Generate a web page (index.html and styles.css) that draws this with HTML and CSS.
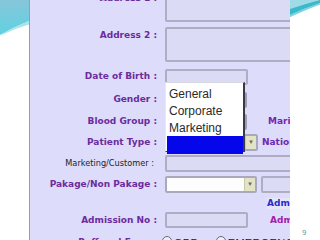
FILE: index.html
```html
<!DOCTYPE html>
<html>
<head>
<meta charset="utf-8">
<link rel="stylesheet" href="styles.css">
</head>
<body>
<div class="slide">
  <div class="gutter gutter-left">
    <svg class="wave-left" width="29" height="40" viewBox="0 0 29 40">
      <defs>
        <linearGradient id="gl" x1="0" y1="0" x2="0" y2="1">
          <stop offset="0" stop-color="#86c6da"/>
          <stop offset="1" stop-color="#5fd2e0"/>
        </linearGradient>
      </defs>
      <path d="M0 0 H29 V21 Q14 27 0 35 Z" fill="url(#gl)"/>
      <path d="M9 31 Q19 25 29 23.5" stroke="#e8f8fa" stroke-width="1" fill="none"/>
      <path d="M0 35 Q14 27 29 21 V24.5 Q16 28 4 34 Z" fill="#a6e4ec"/>
    </svg>
  </div>
  <div class="panel">
    <div class="form">
      <div class="row row-area row-first">
        <div class="lbl">Address 1 :</div>
        <div class="cell"><div class="field area"></div></div>
      </div>
      <div class="row row-area row-second">
        <div class="lbl">Address 2 :</div>
        <div class="cell"><div class="field area"></div></div>
      </div>
      <div class="row h23">
        <div class="lbl">Date of Birth :</div>
        <div class="cell"><div class="field short"></div></div>
      </div>
      <div class="row h23">
        <div class="lbl">Gender :</div>
        <div class="cell">
          <div class="select select-hidden"><span class="sel-body"></span></div>
        </div>
      </div>
      <div class="row h21">
        <div class="lbl">Blood Group :</div>
        <div class="cell">
          <div class="select select-hidden"><span class="sel-body"></span></div>
          <div class="lbl-side lbl-mari">Marital Status :</div>
        </div>
      </div>
      <div class="row h21">
        <div class="lbl">Patient Type :</div>
        <div class="cell">
          <div class="select select-open">
            <span class="sel-body"></span><span class="arrow">&#9662;</span>
            <ul class="listbox">
              <li>General</li>
              <li>Corporate</li>
              <li>Marketing</li>
              <li class="hl"></li>
            </ul>
          </div>
          <div class="lbl-side lbl-natio">Nationality :</div>
        </div>
      </div>
      <div class="row h21">
        <div class="lbl lbl-plain">Marketing/Customer :</div>
        <div class="cell"><div class="field wide"></div></div>
      </div>
      <div class="row h21">
        <div class="lbl">Pakage/Non Pakage :</div>
        <div class="cell">
          <div class="select select-white"><span class="sel-body"></span><span class="arrow">&#9662;</span></div>
          <div class="field extra"></div>
        </div>
      </div>
      <div class="row h16">
        <div class="lbl"></div>
        <div class="cell"><div class="lbl-side lbl-admis">Admission Date :</div></div>
      </div>
      <div class="row h18">
        <div class="lbl">Admission No :</div>
        <div class="cell">
          <div class="field short"></div>
          <div class="lbl-side lbl-admi">Admission Time :</div>
        </div>
      </div>
      <div class="row h20 row-last">
        <div class="lbl">Reffered From :</div>
        <div class="cell cell-radio">
          <span class="radio"></span><span class="radio-text">OPD</span>
          <span class="radio radio-second"></span><span class="radio-text">EMERGENCY</span>
        </div>
      </div>
    </div>
  </div>
  <div class="gutter gutter-right">
    <svg class="wave-right" width="30" height="20" viewBox="0 0 30 20">
      <path d="M0 0 H30 V4 Q15 10 0 17 Z" fill="#9fdbe6"/>
      <path d="M0 9 Q15 4 30 0 V3 Q15 8 0 15 Z" fill="#39b9ca"/>
      <path d="M0 15 Q15 8 30 3 V4.5 Q15 10 0 17 Z" fill="#7fd3e0"/>
    </svg>
    <span class="page-no">9</span>
  </div>
</div>
</body>
</html>
```

FILE: styles.css
```css
html, body {
  margin: 0;
  padding: 0;
  background: #ffffff;
}

.slide {
  width: 320px;
  height: 240px;
  display: flex;
  overflow: hidden;
  background: #ffffff;
}

.gutter {
  flex: none;
  display: flex;
  flex-direction: column;
}

.gutter-left {
  width: 29px;
}

.gutter-right {
  width: 30px;
  justify-content: space-between;
  align-items: flex-start;
}

.wave-left, .wave-right {
  display: block;
}

.page-no {
  font: 7px/8px "DejaVu Sans", sans-serif;
  color: #5fa6b4;
  margin: 0 0 3px 12px;
}

.panel {
  flex: none;
  width: 260px;
  height: 240px;
  border-left: 1px solid #9a9ab4;
  background: #dddcfa;
  overflow: hidden;
}

.form {
  margin-top: -13px;
  display: flex;
  flex-direction: column;
}

.row {
  display: flex;
  align-items: center;
  flex: none;
}

.row-area {
  align-items: flex-start;
  height: 35px;
}

.row-first {
  margin-bottom: 5px;
}

.row-first .lbl {
  padding-top: 6px;
}

.row-second {
  margin-bottom: 3px;
}

.row-second .lbl {
  padding-top: 3px;
}

.h23 { height: 23px; }
.h21 { height: 21px; }
.h20 { height: 20px; }
.h18 { height: 18px; }
.h16 { height: 16px; }

.row-last {
  align-items: flex-start;
}

.row-last .lbl {
  padding-top: 8px;
}

.lbl {
  flex: none;
  width: 127px;
  text-align: right;
  font: bold 9px/11px "DejaVu Sans", sans-serif;
  color: #6c2c9e;
  white-space: nowrap;
}

.lbl-plain {
  font: 8.2px/11px "DejaVu Sans", sans-serif;
  color: #1e1e1e;
  padding-right: 3px;
  box-sizing: border-box;
}

.cell {
  flex: none;
  margin-left: 8px;
  display: flex;
  align-items: center;
  white-space: nowrap;
}

.cell-radio {
  margin-left: 5px;
  align-items: flex-start;
  padding-top: 7px;
}

.field {
  flex: none;
  box-sizing: border-box;
  height: 17px;
  border: 2px solid #aeadc4;
  border-radius: 2px;
  background: #dcdbf6;
}

.area {
  width: 140px;
  height: 35px;
}

.short {
  width: 83px;
  height: 16px;
}

.wide {
  width: 140px;
}

.extra {
  width: 40px;
  margin-left: 4px;
}

.select {
  flex: none;
  position: relative;
  box-sizing: border-box;
  width: 93px;
  height: 17px;
  border: 2px solid #aaa9bc;
  border-radius: 2px;
  background: #dcdbf6;
  display: flex;
  align-items: stretch;
}

.select-hidden {
  width: 82px;
  height: 16px;
  border-color: #9c9cb0;
}

.select-white {
  width: 92px;
  background: #fdfdfd;
}

.sel-body {
  flex: 1;
}

.arrow {
  flex: none;
  width: 10px;
  background: #e3e3c6;
  border-left: 1px solid #c9c9b0;
  font: 7px/13px "DejaVu Sans", sans-serif;
  color: #6a6a5a;
  text-align: center;
}

.listbox {
  position: absolute;
  left: -2px;
  top: -54px;
  width: 80px;
  height: 70px;
  margin: 0;
  padding: 2px 0 0 0;
  box-sizing: border-box;
  list-style: none;
  background: #ffffff;
  border-right: 2px solid #3a3a44;
  border-bottom: 1px solid #3a3a44;
  border-top: 1px solid #d8d8e0;
  border-left: 1px solid #e8e8ee;
  display: flex;
  flex-direction: column;
}

.listbox li {
  height: 17px;
  flex: none;
  padding-left: 3px;
  font: 12px/19px "Liberation Sans", Arial, sans-serif;
  color: #2a2a2a;
}

.listbox .hl {
  margin: 0 0 0 1px;
  height: 17px;
  background: #0606ea;
  border-bottom: 1px solid #1a1a50;
}

.lbl-side {
  flex: none;
  font: bold 9px/11px "DejaVu Sans", sans-serif;
  color: #7a24b0;
}

.lbl-mari {
  margin-left: 21px;
}

.lbl-natio {
  margin-left: 4px;
  color: #7028b0;
}

.lbl-admis {
  margin-left: 102px;
  color: #2b2bc8;
  background: #e6e6fb;
}

.lbl-admi {
  margin-left: 22px;
  color: #a020a8;
}

.radio {
  flex: none;
  width: 8px;
  height: 8px;
  border: 1px solid #6a6a7a;
  border-radius: 50%;
  background: #eeeefa;
  margin-top: 0;
}

.radio-second {
  margin-left: 17px;
}

.radio-text {
  font: 11px/12px "Liberation Sans", Arial, sans-serif;
  color: #222222;
  margin-left: 2px;
  margin-top: 1px;
  letter-spacing: 0.3px;
}
```
